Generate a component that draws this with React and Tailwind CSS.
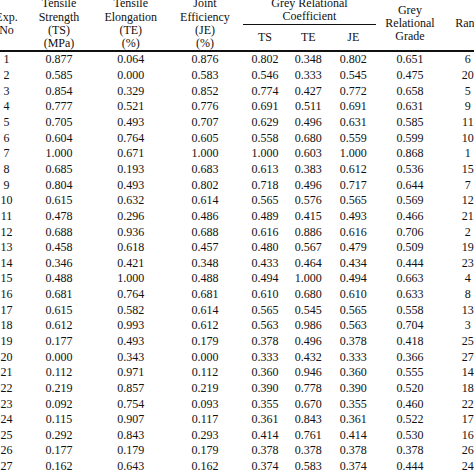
import React from 'react';

// Grey relational analysis table (cropped view of a larger table)
const rows = [
  ['1', '0.877', '0.064', '0.876', '0.802', '0.348', '0.802', '0.651', '6'],
  ['2', '0.585', '0.000', '0.583', '0.546', '0.333', '0.545', '0.475', '20'],
  ['3', '0.854', '0.329', '0.852', '0.774', '0.427', '0.772', '0.658', '5'],
  ['4', '0.777', '0.521', '0.776', '0.691', '0.511', '0.691', '0.631', '9'],
  ['5', '0.705', '0.493', '0.707', '0.629', '0.496', '0.631', '0.585', '11'],
  ['6', '0.604', '0.764', '0.605', '0.558', '0.680', '0.559', '0.599', '10'],
  ['7', '1.000', '0.671', '1.000', '1.000', '0.603', '1.000', '0.868', '1'],
  ['8', '0.685', '0.193', '0.683', '0.613', '0.383', '0.612', '0.536', '15'],
  ['9', '0.804', '0.493', '0.802', '0.718', '0.496', '0.717', '0.644', '7'],
  ['10', '0.615', '0.632', '0.614', '0.565', '0.576', '0.565', '0.569', '12'],
  ['11', '0.478', '0.296', '0.486', '0.489', '0.415', '0.493', '0.466', '21'],
  ['12', '0.688', '0.936', '0.688', '0.616', '0.886', '0.616', '0.706', '2'],
  ['13', '0.458', '0.618', '0.457', '0.480', '0.567', '0.479', '0.509', '19'],
  ['14', '0.346', '0.421', '0.348', '0.433', '0.464', '0.434', '0.444', '23'],
  ['15', '0.488', '1.000', '0.488', '0.494', '1.000', '0.494', '0.663', '4'],
  ['16', '0.681', '0.764', '0.681', '0.610', '0.680', '0.610', '0.633', '8'],
  ['17', '0.615', '0.582', '0.614', '0.565', '0.545', '0.565', '0.558', '13'],
  ['18', '0.612', '0.993', '0.612', '0.563', '0.986', '0.563', '0.704', '3'],
  ['19', '0.177', '0.493', '0.179', '0.378', '0.496', '0.378', '0.418', '25'],
  ['20', '0.000', '0.343', '0.000', '0.333', '0.432', '0.333', '0.366', '27'],
  ['21', '0.112', '0.971', '0.112', '0.360', '0.946', '0.360', '0.555', '14'],
  ['22', '0.219', '0.857', '0.219', '0.390', '0.778', '0.390', '0.520', '18'],
  ['23', '0.092', '0.754', '0.093', '0.355', '0.670', '0.355', '0.460', '22'],
  ['24', '0.115', '0.907', '0.117', '0.361', '0.843', '0.361', '0.522', '17'],
  ['25', '0.292', '0.843', '0.293', '0.414', '0.761', '0.414', '0.530', '16'],
  ['26', '0.177', '0.179', '0.179', '0.378', '0.378', '0.378', '0.378', '26'],
  ['27', '0.162', '0.643', '0.162', '0.374', '0.583', '0.374', '0.444', '24'],
];

const cols = 'grid grid-cols-[53px_52px_91.6px_56.8px_63.2px_23.4px_66.6px_46.8px_69px]';

const Cell = ({ children }) => (
  <div className="flex items-center justify-center whitespace-nowrap">{children}</div>
);

const Head = ({ children }) => (
  <div className="flex items-center justify-center text-center whitespace-nowrap leading-[13.3px]">
    <div>{children}</div>
  </div>
);

export default function App() {
  return (
    <div className="w-[474px] h-[474px] overflow-hidden bg-white text-[#111] font-['Liberation_Serif','Times_New_Roman',serif] text-[12px]">
      <div className="ml-[-20px] mt-[-2.85px] w-[522px]">
        {/* header */}
        <div className={`${cols} h-[55.3px] border-b-2 border-[#111]`}>
          <Head>
            Exp.<br />No
          </Head>
          <Head>
            Tensile<br />Strength<br />(TS)<br />(MPa)
          </Head>
          <Head>
            Tensile<br />Elongation<br />(TE)<br />(%)
          </Head>
          <Head>
            Joint<br />Efficiency<br />(JE)<br />(%)
          </Head>
          <div className="col-span-3 flex flex-col">
            <div className="ml-[9.6px] mr-[10.6px] border-b border-[#111] text-center leading-[13.3px]">
              Grey Relational<br />Coefficient
            </div>
            <div className="grid grid-cols-[63.2px_23.4px_66.6px] pt-[5.9px] leading-[13.3px]">
              <Cell>TS</Cell>
              <Cell>TE</Cell>
              <Cell>JE</Cell>
            </div>
          </div>
          <Head>
            Grey<br />Relational<br />Grade
          </Head>
          <Head>Rank</Head>
        </div>

        {/* body */}
        {rows.map((r) => (
          <div key={r[0]} className={`${cols} h-[15.65px] leading-[15.65px]`}>
            {r.map((v, i) => (
              <Cell key={i}>{v}</Cell>
            ))}
          </div>
        ))}
      </div>
    </div>
  );
}
